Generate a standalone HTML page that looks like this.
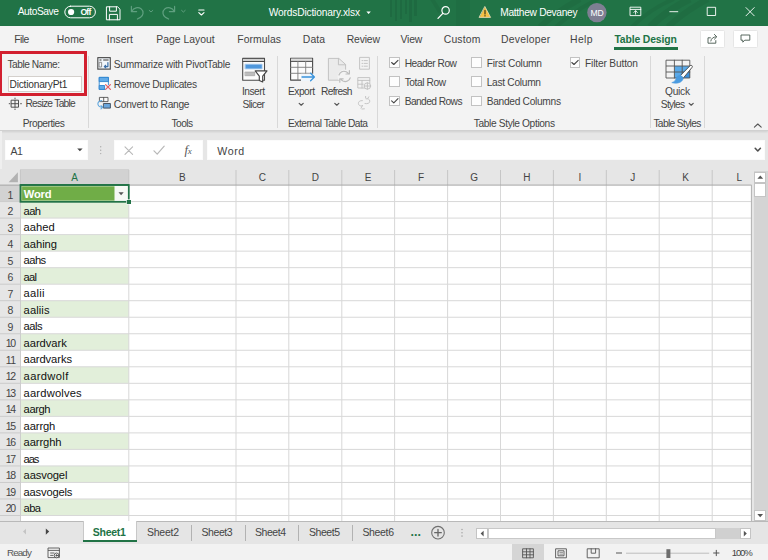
<!DOCTYPE html>
<html lang="en"><head><meta charset="utf-8"><title>WordsDictionary.xlsx - Excel</title>
<style>
html,body{margin:0;padding:0;}
body{width:768px;height:560px;overflow:hidden;position:relative;background:#e6e6e6;font-family:"Liberation Sans",sans-serif;}
.a{position:absolute;}
.t{position:absolute;white-space:nowrap;line-height:20px;height:20px;font-family:"Liberation Sans",sans-serif;}
svg{position:absolute;overflow:visible;}
#title{left:0;top:0;width:768px;height:25.6px;background:#217346;}
#ribbon{left:0;top:25.6px;width:768px;height:104.2px;background:#f3f3f3;border-bottom:1px solid #d0d0d0;box-shadow:0 1px 2px rgba(0,0,0,0.10);}
.sep{position:absolute;width:1px;background:#d8d8d8;top:56px;height:72px;}
.cb{position:absolute;width:8.6px;height:8.6px;border:1px solid #c2c2c2;background:#fdfdfd;}
.box{position:absolute;background:#fff;border:1px solid #dcdcdc;box-sizing:border-box;}
.vl{position:absolute;width:1px;background:#d9d9d9;top:185px;height:336px;}
.hl{position:absolute;height:1px;background:#d9d9d9;left:20.4px;width:731.4px;}
.band{position:absolute;left:20.9px;width:108.1px;background:#e2efda;}
.hsep{position:absolute;width:1px;background:#c9c9c9;top:170px;height:15px;}
.tsep{position:absolute;width:1px;background:#b2b2b2;top:525px;height:15.5px;}

</style></head>
<body>
<div class="a" id="title"></div>
<div class="a" style="left:389.5px;top:0;width:2.4px;height:17px;background:rgba(0,0,0,0.07);"></div>
<div class="a" style="left:394.6px;top:0;width:2.4px;height:21px;background:rgba(0,0,0,0.07);"></div>
<div class="a" style="left:399.8px;top:0;width:2.4px;height:19px;background:rgba(0,0,0,0.07);"></div>
<div class="a" style="left:404.6px;top:0;width:2.4px;height:14px;background:rgba(0,0,0,0.07);"></div>
<div class="a" style="left:409.4px;top:0;width:2.4px;height:22px;background:rgba(0,0,0,0.07);"></div>
<div class="a" style="left:414.4px;top:0;width:2.4px;height:16px;background:rgba(0,0,0,0.07);"></div>
<div class="a" style="left:456px;top:0;width:14px;height:25.6px;background:rgba(0,0,0,0.04);"></div>
<svg width="768" height="25.6" viewBox="0 0 768 25.6" style="left:0;top:0;overflow:hidden;" fill="none" stroke="rgba(0,0,0,0.05)"><path d="M650 27Q667 10 690 -1" stroke-width="7"/><path d="M668 27Q685 11 708 -1" stroke-width="6"/><path d="M632 27Q650 9 674 -1" stroke-width="4"/><path d="M540 27Q556 12 580 -1" stroke-width="6"/><path d="M556 27Q572 12 598 -1" stroke-width="4"/><path d="M432 -1L440 12" stroke-width="4"/></svg>
<div class="a" id="ribbon"></div>
<!-- tab underline + share/comment buttons -->
<div class="a" style="left:614.2px;top:47.4px;width:63.4px;height:2.4px;background:#217346;"></div>
<div class="box" style="left:699.7px;top:30px;width:25.4px;height:17.8px;border-color:#e6e6e6;border-radius:1.5px;"></div>
<div class="box" style="left:733.3px;top:30px;width:24.6px;height:17.8px;border-color:#e6e6e6;border-radius:1.5px;"></div>
<!-- ribbon separators -->
<div class="sep" style="left:88px;"></div>
<div class="sep" style="left:277.3px;"></div>
<div class="sep" style="left:377.4px;"></div>
<div class="sep" style="left:650.2px;"></div>
<div class="sep" style="left:704.3px;"></div>
<!-- table name input + red box -->
<div class="box" style="left:7.6px;top:75.6px;width:74.4px;height:16px;border-color:#d4d0cc;"></div>
<div class="a" style="left:-1px;top:51px;width:82px;height:39px;border:3px solid #d2202f;"></div>
<!-- checkboxes -->
<div class="cb" style="left:389.4px;top:57px;"></div>
<div class="cb" style="left:389.4px;top:76.2px;"></div>
<div class="cb" style="left:389.4px;top:95.5px;"></div>
<div class="cb" style="left:471.2px;top:57px;"></div>
<div class="cb" style="left:471.2px;top:76.2px;"></div>
<div class="cb" style="left:471.2px;top:95.5px;"></div>
<div class="cb" style="left:569.6px;top:57px;"></div>
<div class="a" style="left:0;top:131px;width:1.5px;height:38px;background:#efefef;"></div>
<!-- formula bar -->
<div class="box" style="left:4.7px;top:140.1px;width:83.8px;height:20.1px;border-color:#fbfbfb;"></div>
<div class="box" style="left:113.5px;top:140.1px;width:89.7px;height:20.1px;border-color:#fbfbfb;"></div>
<div class="box" style="left:206.8px;top:140.1px;width:557.8px;height:20.1px;border-color:#fbfbfb;"></div>
<!-- column headers -->
<div class="a" style="left:0;top:169.3px;width:752px;height:15.6px;background:#e6e6e6;"></div>
<div class="a" style="left:20.4px;top:169.3px;width:108.4px;height:15.6px;background:#d2d2d2;"></div>
<!-- grid -->
<div class="a" id="grid" style="left:20.4px;top:184.9px;width:731.4px;height:336px;background:#fff;"></div>
<div class="a" style="left:0;top:184.9px;width:20.4px;height:336px;background:#e6e6e6;"></div>
<div class="a" style="left:0;top:184.9px;width:20.4px;height:16.6px;background:#d2d2d2;"></div>
<svg width="768" height="560" viewBox="0 0 768 560" style="left:0;top:0;">
<rect x="20.90" y="185.05" width="107.90" height="16.52" fill="#70ad47"/>
<rect x="20.90" y="201.57" width="107.90" height="16.52" fill="#e2efda"/>
<rect x="20.90" y="234.62" width="107.90" height="16.52" fill="#e2efda"/>
<rect x="20.90" y="267.66" width="107.90" height="16.52" fill="#e2efda"/>
<rect x="20.90" y="300.70" width="107.90" height="16.52" fill="#e2efda"/>
<rect x="20.90" y="333.75" width="107.90" height="16.52" fill="#e2efda"/>
<rect x="20.90" y="366.79" width="107.90" height="16.52" fill="#e2efda"/>
<rect x="20.90" y="399.84" width="107.90" height="16.52" fill="#e2efda"/>
<rect x="20.90" y="432.88" width="107.90" height="16.52" fill="#e2efda"/>
<rect x="20.90" y="465.92" width="107.90" height="16.52" fill="#e2efda"/>
<rect x="20.90" y="498.97" width="107.90" height="16.52" fill="#e2efda"/>
<rect x="114.50" y="185.05" width="14.30" height="16.52" fill="#f6f9f4"/>
<rect x="128.30" y="185.05" width="1.00" height="335.95" fill="#d8d8d8"/>
<rect x="235.50" y="185.05" width="1.00" height="335.95" fill="#d8d8d8"/>
<rect x="288.30" y="185.05" width="1.00" height="335.95" fill="#d8d8d8"/>
<rect x="341.30" y="185.05" width="1.00" height="335.95" fill="#d8d8d8"/>
<rect x="394.10" y="185.05" width="1.00" height="335.95" fill="#d8d8d8"/>
<rect x="447.10" y="185.05" width="1.00" height="335.95" fill="#d8d8d8"/>
<rect x="500.00" y="185.05" width="1.00" height="335.95" fill="#d8d8d8"/>
<rect x="552.90" y="185.05" width="1.00" height="335.95" fill="#d8d8d8"/>
<rect x="605.80" y="185.05" width="1.00" height="335.95" fill="#d8d8d8"/>
<rect x="658.70" y="185.05" width="1.00" height="335.95" fill="#d8d8d8"/>
<rect x="711.70" y="185.05" width="1.00" height="335.95" fill="#d8d8d8"/>
<rect x="20.40" y="201.07" width="731.00" height="1.00" fill="#d8d8d8"/>
<rect x="0.00" y="201.07" width="20.40" height="1.00" fill="#cbcbcb"/>
<rect x="20.40" y="217.59" width="731.00" height="1.00" fill="#d8d8d8"/>
<rect x="0.00" y="217.59" width="20.40" height="1.00" fill="#cbcbcb"/>
<rect x="20.40" y="234.12" width="731.00" height="1.00" fill="#d8d8d8"/>
<rect x="0.00" y="234.12" width="20.40" height="1.00" fill="#cbcbcb"/>
<rect x="20.40" y="250.64" width="731.00" height="1.00" fill="#d8d8d8"/>
<rect x="0.00" y="250.64" width="20.40" height="1.00" fill="#cbcbcb"/>
<rect x="20.40" y="267.16" width="731.00" height="1.00" fill="#d8d8d8"/>
<rect x="0.00" y="267.16" width="20.40" height="1.00" fill="#cbcbcb"/>
<rect x="20.40" y="283.68" width="731.00" height="1.00" fill="#d8d8d8"/>
<rect x="0.00" y="283.68" width="20.40" height="1.00" fill="#cbcbcb"/>
<rect x="20.40" y="300.20" width="731.00" height="1.00" fill="#d8d8d8"/>
<rect x="0.00" y="300.20" width="20.40" height="1.00" fill="#cbcbcb"/>
<rect x="20.40" y="316.73" width="731.00" height="1.00" fill="#d8d8d8"/>
<rect x="0.00" y="316.73" width="20.40" height="1.00" fill="#cbcbcb"/>
<rect x="20.40" y="333.25" width="731.00" height="1.00" fill="#d8d8d8"/>
<rect x="0.00" y="333.25" width="20.40" height="1.00" fill="#cbcbcb"/>
<rect x="20.40" y="349.77" width="731.00" height="1.00" fill="#d8d8d8"/>
<rect x="0.00" y="349.77" width="20.40" height="1.00" fill="#cbcbcb"/>
<rect x="20.40" y="366.29" width="731.00" height="1.00" fill="#d8d8d8"/>
<rect x="0.00" y="366.29" width="20.40" height="1.00" fill="#cbcbcb"/>
<rect x="20.40" y="382.81" width="731.00" height="1.00" fill="#d8d8d8"/>
<rect x="0.00" y="382.81" width="20.40" height="1.00" fill="#cbcbcb"/>
<rect x="20.40" y="399.34" width="731.00" height="1.00" fill="#d8d8d8"/>
<rect x="0.00" y="399.34" width="20.40" height="1.00" fill="#cbcbcb"/>
<rect x="20.40" y="415.86" width="731.00" height="1.00" fill="#d8d8d8"/>
<rect x="0.00" y="415.86" width="20.40" height="1.00" fill="#cbcbcb"/>
<rect x="20.40" y="432.38" width="731.00" height="1.00" fill="#d8d8d8"/>
<rect x="0.00" y="432.38" width="20.40" height="1.00" fill="#cbcbcb"/>
<rect x="20.40" y="448.90" width="731.00" height="1.00" fill="#d8d8d8"/>
<rect x="0.00" y="448.90" width="20.40" height="1.00" fill="#cbcbcb"/>
<rect x="20.40" y="465.42" width="731.00" height="1.00" fill="#d8d8d8"/>
<rect x="0.00" y="465.42" width="20.40" height="1.00" fill="#cbcbcb"/>
<rect x="20.40" y="481.95" width="731.00" height="1.00" fill="#d8d8d8"/>
<rect x="0.00" y="481.95" width="20.40" height="1.00" fill="#cbcbcb"/>
<rect x="20.40" y="498.47" width="731.00" height="1.00" fill="#d8d8d8"/>
<rect x="0.00" y="498.47" width="20.40" height="1.00" fill="#cbcbcb"/>
<rect x="20.40" y="514.99" width="731.00" height="1.00" fill="#d8d8d8"/>
<rect x="0.00" y="514.99" width="20.40" height="1.00" fill="#cbcbcb"/>
<rect x="19.90" y="170.00" width="1.00" height="15.00" fill="#c6c6c6"/>
<rect x="128.30" y="170.00" width="1.00" height="15.00" fill="#c6c6c6"/>
<rect x="235.50" y="170.00" width="1.00" height="15.00" fill="#c6c6c6"/>
<rect x="288.30" y="170.00" width="1.00" height="15.00" fill="#c6c6c6"/>
<rect x="341.30" y="170.00" width="1.00" height="15.00" fill="#c6c6c6"/>
<rect x="394.10" y="170.00" width="1.00" height="15.00" fill="#c6c6c6"/>
<rect x="447.10" y="170.00" width="1.00" height="15.00" fill="#c6c6c6"/>
<rect x="500.00" y="170.00" width="1.00" height="15.00" fill="#c6c6c6"/>
<rect x="552.90" y="170.00" width="1.00" height="15.00" fill="#c6c6c6"/>
<rect x="605.80" y="170.00" width="1.00" height="15.00" fill="#c6c6c6"/>
<rect x="658.70" y="170.00" width="1.00" height="15.00" fill="#c6c6c6"/>
<rect x="711.70" y="170.00" width="1.00" height="15.00" fill="#c6c6c6"/>
<rect x="0.00" y="184.60" width="751.60" height="1.00" fill="#a6a6a6"/>
<rect x="20.00" y="185.45" width="1.00" height="335.95" fill="#cdcdcd"/>
<rect x="750.90" y="185.05" width="1.00" height="335.95" fill="#b0b0b0"/>
<rect x="20.40" y="184.10" width="108.40" height="1.40" fill="#217346"/>
<rect x="20.5" y="185.05" width="108.25" height="16.75" fill="none" stroke="#217346" stroke-width="1.8"/>
<rect x="21.8" y="186.35" width="105.65" height="14.15" fill="none" stroke="rgba(255,255,255,0.4)" stroke-width="0.8"/>
<rect x="126.20" y="199.40" width="5.00" height="5.00" fill="#fff"/>
<rect x="126.80" y="200.00" width="4.20" height="4.00" fill="#217346"/>
</svg>
<!-- bottom -->
<div class="a" style="left:0;top:520.9px;width:768px;height:23.4px;background:#e5e5e5;border-top:1px solid #b9b9b9;box-sizing:border-box;"></div>
<div class="a" style="left:0;top:544.2px;width:768px;height:15.8px;background:#f2f2f2;"></div>
<div class="a" style="left:83.2px;top:520.6px;width:53.8px;height:20px;background:#fff;border-left:1px solid #c8c8c8;border-right:1px solid #c8c8c8;box-sizing:border-box;"></div>
<div class="a" style="left:82.9px;top:540px;width:54.2px;height:1.8px;background:#217346;"></div>
<div class="tsep" style="left:190.8px;"></div>
<div class="tsep" style="left:244.5px;"></div>
<div class="tsep" style="left:298.1px;"></div>
<div class="tsep" style="left:351.8px;"></div>
<!-- scrollbars -->
<div class="a" style="left:754.2px;top:169.3px;width:13.8px;height:352px;background:#d4d4d4;"></div>
<div class="a" style="left:754.2px;top:169.3px;width:13.8px;height:2.2px;background:#e6e6e6;"></div>
<div class="box" style="left:754.4px;top:171.5px;width:11.4px;height:11.2px;border-color:#c4c4c4;"></div>
<div class="box" style="left:754.4px;top:183px;width:11.4px;height:13.8px;border-color:#c4c4c4;"></div>
<div class="box" style="left:754.4px;top:509.8px;width:11.6px;height:11.4px;border-color:#c4c4c4;"></div>
<div class="a" style="left:476.6px;top:527.8px;width:273.6px;height:11.2px;background:#d0d0d0;"></div>
<div class="box" style="left:475.8px;top:527.8px;width:11.8px;height:11.2px;border-color:#c4c4c4;"></div>
<div class="box" style="left:487.6px;top:527.8px;width:228px;height:11.2px;border-color:#c8c8c8;"></div>
<div class="box" style="left:739.8px;top:527.8px;width:11.6px;height:11.2px;border-color:#c4c4c4;"></div>
<div class="a" style="left:511.8px;top:543.8px;width:32.4px;height:16.2px;background:#d5d5d5;"></div>
<svg width="768" height="560" viewBox="0 0 768 560" style="left:0;top:0;" fill="none" stroke-linecap="round" stroke-linejoin="round">
<!-- ===== title bar ===== -->
<g stroke="#fff" stroke-width="1">
 <rect x="64.8" y="6.2" width="30.6" height="11.6" rx="5.8"/>
 <circle cx="71.1" cy="12" r="3.1" fill="#fff" stroke="none"/>
 <!-- save -->
 <path d="M106.8 6.8h10.8l2.4 2.4v10.6h-13.2z"/>
 <path d="M109.6 6.8v4.4h6.8v-4.4M109.4 19.8v-5.4h8v5.4"/>
 <!-- customize -->
 <path d="M198.8 10h5.2" stroke-width="1.1"/>
 <path d="M198.8 12.6l2.6 2.4 2.6-2.4" stroke-width="1.1"/>
 <!-- filename caret -->
 <path d="M366.4 11.6h4.4l-2.2 2.4z" fill="#fff" stroke="none"/>
 <!-- search -->
 <circle cx="445.6" cy="10.4" r="3.7" stroke-width="1.2"/>
 <path d="M442.8 13.4l-4.8 5" stroke-width="1.3"/>
 <!-- ribbon display options -->
 <rect x="630.4" y="7.2" width="10.4" height="8.4" stroke-width="0.9"/>
 <path d="M630.4 9.4h10.4" stroke-width="0.9"/>
 <path d="M635.6 14.200v-3.400M633.900 12.400l1.700-1.700 1.700 1.700" stroke-width="0.9"/>
 <!-- min max close -->
 <path d="M669.8 11.700h8" stroke-width="0.9"/>
 <rect x="707.6" y="7.300" width="8" height="8.200" stroke-width="0.9"/>
 <path d="M746 7.600l8.200 8.200M754.200 7.600l-8.200 8.200" stroke-width="0.9"/>
</g>
<!-- undo / redo dimmed -->
<g stroke="#5f9f7f" stroke-width="1.2">
 <path d="M131.4 6.4v5.2h5.2"/>
 <path d="M131.8 11.2c2-3.6 6.4-4.6 9.2-2.4 3.2 2.6 2.4 6.6-0.6 8.6l-3 1.6"/>
 <path d="M149.2 10.4l1.8 1.6 1.8-1.6" stroke-width="1"/>
 <path d="M174.6 6.4v5.2h-5.2"/>
 <path d="M174.2 11.2c-2-3.6-6.400-4.600-9.200-2.400-3.200 2.600-2.400 6.600 0.600 8.600l3 1.600"/>
 <path d="M181.600 10.400l1.800 1.600 1.800-1.600" stroke-width="1"/>
</g>
<!-- warning -->
<path d="M485 6.800l5.600 10.600h-11.200z" fill="#f4c044" stroke="#e8e0c0" stroke-width="0.8"/>
<path d="M485 10.400v3.600M485 15.600v0.300" stroke="#3a3a1a" stroke-width="1.200"/>
<!-- avatar -->
<circle cx="596.900" cy="12.600" r="9.700" fill="#7e7f93" stroke="none"/>
<!-- share / comments -->
<g stroke="#46584e" stroke-width="0.9">
 <path d="M710.4 37.800h-2.400v5.400h7.800v-2.600"/>
 <path d="M710.800 41c0.400-2.600 2.400-4 5.200-4.200M714.400 34.400l2.400 2.400-2.400 2.400"/>
 <path d="M741.400 35h8.400v5.200h-5l-2 2v-2h-1.400z"/>
</g>
<!-- ===== ribbon ===== -->
<!-- resize table -->
<g stroke="#4a4a4a" stroke-width="0.95">
 <rect x="11.500" y="100.200" width="7" height="7"/>
 <path d="M11.500 103.700h7M15 100.200v7"/>
 <path d="M9.800 103.700h-0.600M20.600 103.700h0.800M15 98.600v-0.500M15 109v0.600"/>
</g>
<!-- pivot -->
<g>
 <rect x="97.8" y="57.700" width="12.500" height="11.500" fill="#f1f6fb" stroke="#555" stroke-width="1.2"/>
 <path d="M99.500 60h2M103.200 60h5.400" stroke="#7a7a7a" stroke-width="1.400" stroke-linecap="butt"/>
 <rect x="99.500" y="62.300" width="2.100" height="4.700" fill="none" stroke="#7a7a7a" stroke-width="0.800"/>
 <path d="M107.900 62.500v4.100h-3.400M105.700 65.300l-1.400 1.300 1.400 1.300" stroke="#3b6fa8" stroke-width="1.200"/>
</g>
<!-- remove duplicates -->
<g>
 <rect x="99.6" y="77.400" width="8.800" height="12" fill="#fff" stroke="#2f84cf" stroke-width="0.9"/>
 <rect x="99.6" y="77.400" width="8.800" height="4.200" fill="#62abe8" stroke="#2f84cf" stroke-width="0.9"/>
 <rect x="99.6" y="85.500" width="5" height="3.900" fill="#62abe8" stroke="#2f84cf" stroke-width="0.900"/>
 <rect x="105.100" y="85" width="4" height="5" fill="#f3f3f3" stroke="none"/>
 <path d="M105.600 84.600l4.800 4.800M110.400 84.600l-4.800 4.800" stroke="#e4606a" stroke-width="1.200"/>
</g>
<!-- convert to range -->
<g>
 <rect x="99.800" y="97.400" width="8.200" height="4.200" fill="#f8f8f8" stroke="#555" stroke-width="0.900"/>
 <path d="M103.700 97.400v4.200" stroke="#555" stroke-width="0.900"/>
 <rect x="103.800" y="103.500" width="6.600" height="4.600" fill="#6aa6dc" stroke="#3c4a5a" stroke-width="0.900"/>
 <path d="M101.800 100.600c-2.800 0.200-4.400 2-3.800 4 0.500 1.600 2.200 2.600 4.600 2.600M101 105.600l1.800 1.600-1.800 1.600" stroke="#5fa6de" stroke-width="1.100"/>
</g>
<!-- slicer -->
<g>
 <rect x="242.700" y="58.400" width="21.800" height="21.900" fill="#fcfcfc" stroke="#4a4a4a" stroke-width="1.1"/>
 <rect x="243.200" y="58.900" width="20.800" height="2.300" fill="#cfcfcf" stroke="none"/>
 <path d="M242.700 61.500h21.800" stroke="#4a4a4a" stroke-width="1"/>
 <rect x="245.300" y="64.200" width="16.800" height="4.700" fill="#4f97dc" stroke="#a9cdf0" stroke-width="0.800"/>
 <rect x="245.300" y="72" width="9.400" height="3.700" fill="#bdbdbd" stroke="#9a9a9a" stroke-width="0.600"/>
 <path d="M255.200 70.900h11.800l-4.300 5.200v5.900l-3.400-1.600v-4.300z" fill="#fff" stroke="#444" stroke-width="1.150"/>
</g>
<!-- export -->
<g>
 <rect x="290.600" y="58.200" width="22" height="21.900" fill="#fcfcfc" stroke="#4a4a4a" stroke-width="1.1"/>
 <rect x="291.100" y="58.700" width="21" height="2.300" fill="#dcdcdc" stroke="none"/>
 <path d="M290.600 61.400h22" stroke="#4a4a4a" stroke-width="1"/>
 <path d="M290.600 67.300h22M290.600 73.300h22M297.900 61.400v18.700M305.700 61.400v18.700" stroke="#7d7d7d" stroke-width="0.900"/>
 <rect x="301" y="73.800" width="14" height="7.200" fill="#eef5fb" stroke="none"/>
 <path d="M302 77h12.200M310.600 73.200l3.800 3.800-3.800 3.800" stroke="#3a93dc" stroke-width="1.300"/>
</g>
<!-- refresh (disabled) -->
<g stroke="#c2c2c2" stroke-width="1">
 <path d="M338.400 58.400h-10v21.800h17.200v-15.400z" fill="#ebebeb"/>
 <path d="M338.400 58.400v6.400h7.200" fill="none"/>
 <circle cx="344.600" cy="76.400" r="7" fill="#f3f3f3" stroke="none"/>
 <path d="M339 75c0.800-3 4.200-4.600 7.200-3.200 1 0.500 1.800 1.200 2.400 2.200M349.400 70.600v3.400h-3.400" stroke="#bcbcbc" stroke-width="1.200" fill="none"/>
 <path d="M350.200 77.800c-0.800 3-4.200 4.600-7.200 3.200-1-0.500-1.800-1.200-2.400-2.200M339.800 82.200v-3.400h3.400" stroke="#bcbcbc" stroke-width="1.200" fill="none"/>
</g>
<!-- small disabled icons -->
<g stroke="#c0c0c0" stroke-width="0.900">
 <rect x="360" y="57.400" width="9.400" height="11.800"/>
 <path d="M362 60.600h1M364.400 60.600h3M362 63.400h1M364.400 63.400h3M362 66.200h1M364.400 66.200h3"/>
 <rect x="358.200" y="77.600" width="11.600" height="10.400"/>
 <path d="M358.200 80.400h11.600M362 80.400v7.600M358.200 84.200h5"/>
 <circle cx="367.400" cy="86" r="3.200" fill="#f3f3f3"/>
 <path d="M364.200 86h6.400M367.400 82.800v6.400"/>
 <path d="M362.400 100.600c-2.800-0.200-4 1.200-4 2.800s1.400 2.800 3.400 2.600M365 103.600c2.600 0.400 4.800-0.400 4.800-2.400s-1.600-2.600-3.600-2.400M361 108.200l1.600-2.800M368.800 96.800l-1 1.600M365.600 96.400v1.600M362 109l2.400-0.200"/>
</g>
<!-- carets -->
<g stroke="#555" stroke-width="1.25">
 <path d="M299.200 103.400l2 1.800 2-1.800"/>
 <path d="M334.800 103.400l2 1.800 2-1.800"/>
 <path d="M689.200 103.400l2 1.800 2-1.800"/>
 <path d="M754.400 127.200l3.400-3.200 3.400 3.200" stroke-width="1.100"/>
</g>
<!-- checkmarks -->
<g stroke="#444" stroke-width="1.100">
 <path d="M391.600 62.500l2.200 2 4.200-4.200"/>
 <path d="M391.600 100.900l2.200 2 4.200-4.200"/>
 <path d="M571.800 62.500l2.200 2 4.200-4.200"/>
</g>
<!-- quick styles -->
<g>
 <rect x="674.400" y="66" width="15.400" height="12" fill="#5aa9e8" stroke="none"/>
 <rect x="682.200" y="72" width="7.600" height="6" fill="#3d8fd9" stroke="none"/>
 <rect x="666.400" y="60.200" width="23.400" height="17.800" stroke="#555" stroke-width="0.900"/>
 <path d="M666.400 66h23.400M666.400 72h23.400M674.400 60.200v17.800M682.200 60.200v17.800" stroke="#555" stroke-width="0.900"/>
 <path d="M690.600 65.400c1.200-0.400 2.200 0.600 1.600 1.800l-8.800 10.800-2.800-2.200z" fill="#fff" stroke="#555" stroke-width="1"/>
 <path d="M680.400 75.600c1.800 0.500 3 2 2.600 3.600-1.400 3.400-6.200 5-11.200 3.400 2.400-0.700 3.500-1.900 4.100-3.700 0.700-2.300 2.400-3.800 4.500-3.300z" fill="#4a9be0" stroke="#4a9be0" stroke-width="0.600"/>
</g>
<!-- ===== formula bar ===== -->
<path d="M77.200 148.400h5.400l-2.700 2.900z" fill="#444"/>
<path d="M755.200 148.300l2.600 2.700 2.600-2.700" stroke="#505050" stroke-width="1.600"/>
<g fill="#aaa" stroke="none">
 <circle cx="100.700" cy="146.800" r="0.700"/><circle cx="100.700" cy="150.200" r="0.700"/><circle cx="100.700" cy="153.600" r="0.700"/>
 <circle cx="462" cy="529.500" r="0.800"/><circle cx="462" cy="532.800" r="0.800"/><circle cx="462" cy="536.100" r="0.800"/>
</g>
<path d="M125 146.800l7.600 7.600M132.600 146.800l-7.600 7.600" stroke="#b8b8b8" stroke-width="1.100"/>
<path d="M154 150.800l3.200 3.400 7-8" stroke="#b8b8b8" stroke-width="1.200"/>
<!-- select-all triangle -->
<path d="M17.9 172.2v10h-9.3z" fill="#b2b2b2"/>
<!-- filter caret -->
<path d="M118.500 192.300h5.200l-2.600 2.900z" fill="#555"/>
<!-- scrollbar arrows -->
<g fill="#555">
 <path d="M757.400 178.800h5.800l-2.900-3.200z"/>
 <path d="M757.300 514h5.800l-2.900 3.200z"/>
 <path d="M483.600 530.800v5.600l-3-2.800z"/>
 <path d="M743.800 530.800v5.600l3-2.800z"/>
 <path d="M45.800 528.400v6.400l3.400-3.200z" fill="#444"/>
 <path d="M26 528.800v5.600l-3-2.800z" fill="#c4c4c4"/>
</g>
<!-- new sheet -->
<circle cx="438" cy="532.7" r="6.3" stroke="#707070" stroke-width="1.1"/>
<path d="M434.700 532.700h6.600M438 529.400v6.600" stroke="#666" stroke-width="1.3"/>
<!-- ===== status bar ===== -->
<g stroke="#555" stroke-width="0.900">
 <rect x="48.400" y="548" width="11" height="9.600"/>
 <path d="M48.400 550.400h11M50.600 553h3.400M50.600 555.400h2.400"/>
 <circle cx="56.600" cy="555.400" r="2.400" fill="#f3f3f3"/>
 <circle cx="56.600" cy="555.400" r="0.700" fill="#555"/>
 <!-- normal -->
 <rect x="523" y="548.800" width="10.400" height="9"/>
 <path d="M523 551.800h10.400M523 554.800h10.400M526.500 548.800v9M530 548.800v9"/>
 <!-- page layout -->
 <rect x="556" y="548.800" width="10.400" height="9"/>
 <rect x="558.400" y="550.800" width="5.600" height="5"/>
 <path d="M559.800 552.600h2.800M559.800 554.200h2.800" stroke-width="0.600"/>
 <!-- page break -->
 <rect x="587.600" y="548.800" width="11.600" height="9"/>
 <path d="M591.200 548.800v4.400h4.400v-4.400"/>
 <!-- zoom -->
 <path d="M616.400 553h5.200" stroke-width="1"/>
 <path d="M626.400 553.200h82.400" stroke="#a8a8a8" stroke-width="0.700"/>
 <path d="M713.600 553h5.400M716.300 550.300v5.400" stroke-width="1"/>
 <rect x="666.400" y="549.200" width="4" height="8.800" fill="#6e6e6e" stroke="none"/>
</g>
</svg>
<span class="t" style="left:184.600px;top:140.400px;font-family:'Liberation Serif',serif;font-style:italic;font-size:12.500px;color:#555;letter-spacing:-0.300px;">f<span style="font-size:9px;">x</span></span>


<div id="txt">
<span class="t" style="font-size:10.2px;color:#fff;top:2.40px;letter-spacing:-0.427px;left:17.70px;">AutoSave</span>
<span class="t" style="font-size:8.6px;color:#fff;top:2.30px;font-weight:bold;letter-spacing:-0.711px;left:80.40px;">Off</span>
<span class="t" style="font-size:10.2px;color:#fff;top:2.60px;letter-spacing:-0.151px;left:268.70px;">WordsDictionary.xlsx</span>
<span class="t" style="font-size:10.2px;color:#fff;top:2.80px;letter-spacing:-0.310px;left:500.30px;">Matthew Devaney</span>
<span class="t" style="font-size:8.6px;color:#fff;top:2.90px;letter-spacing:-0.175px;left:590.60px;">MD</span>
<span class="t" style="font-size:10.4px;color:#444;top:29.90px;letter-spacing:-0.617px;left:14.30px;">File</span>
<span class="t" style="font-size:10.4px;color:#444;top:29.90px;letter-spacing:0.027px;left:56.80px;">Home</span>
<span class="t" style="font-size:10.4px;color:#444;top:29.90px;letter-spacing:0.000px;left:106.80px;">Insert</span>
<span class="t" style="font-size:10.4px;color:#444;top:29.90px;letter-spacing:-0.001px;left:156.25px;">Page Layout</span>
<span class="t" style="font-size:10.4px;color:#444;top:29.90px;letter-spacing:0.055px;left:237.30px;">Formulas</span>
<span class="t" style="font-size:10.4px;color:#444;top:29.90px;letter-spacing:0.082px;left:302.80px;">Data</span>
<span class="t" style="font-size:10.4px;color:#444;top:29.90px;letter-spacing:-0.156px;left:346.70px;">Review</span>
<span class="t" style="font-size:10.4px;color:#444;top:29.90px;letter-spacing:-0.181px;left:400.50px;">View</span>
<span class="t" style="font-size:10.4px;color:#444;top:29.90px;letter-spacing:0.138px;left:443.80px;">Custom</span>
<span class="t" style="font-size:10.4px;color:#444;top:29.90px;letter-spacing:0.241px;left:501.00px;">Developer</span>
<span class="t" style="font-size:10.4px;color:#444;top:29.90px;letter-spacing:0.408px;left:570.00px;">Help</span>
<span class="t" style="font-size:10.4px;color:#217346;top:29.90px;font-weight:bold;letter-spacing:-0.137px;left:614.40px;">Table Design</span>
<span class="t" style="font-size:10.2px;color:#444;top:54.50px;letter-spacing:-0.470px;left:7.50px;">Table Name:</span>
<span class="t" style="font-size:10.2px;color:#333;top:74.50px;letter-spacing:-0.216px;left:9.50px;">DictionaryPt1</span>
<span class="t" style="font-size:10.2px;color:#444;top:94.30px;letter-spacing:-0.704px;left:25.40px;">Resize Table</span>
<span class="t" style="font-size:10.2px;color:#444;top:114.10px;letter-spacing:-0.493px;left:22.80px;">Properties</span>
<span class="t" style="font-size:10.2px;color:#444;top:55.20px;letter-spacing:-0.231px;left:113.75px;">Summarize with PivotTable</span>
<span class="t" style="font-size:10.2px;color:#444;top:74.90px;letter-spacing:-0.318px;left:113.75px;">Remove Duplicates</span>
<span class="t" style="font-size:10.2px;color:#444;top:94.60px;letter-spacing:-0.274px;left:113.75px;">Convert to Range</span>
<span class="t" style="font-size:10.2px;color:#444;top:114.10px;letter-spacing:-0.595px;left:171.60px;">Tools</span>
<span class="t" style="font-size:10.2px;color:#444;top:81.70px;letter-spacing:-0.497px;left:242.00px;">Insert</span>
<span class="t" style="font-size:10.2px;color:#444;top:94.60px;letter-spacing:-0.597px;left:242.50px;">Slicer</span>
<span class="t" style="font-size:10.2px;color:#444;top:81.70px;letter-spacing:-0.491px;left:288.00px;">Export</span>
<span class="t" style="font-size:10.2px;color:#444;top:81.70px;letter-spacing:-0.695px;left:321.00px;">Refresh</span>
<span class="t" style="font-size:10.2px;color:#444;top:114.10px;letter-spacing:-0.485px;left:288.00px;">External Table Data</span>
<span class="t" style="font-size:10.2px;color:#444;top:53.60px;letter-spacing:-0.481px;left:404.70px;">Header Row</span>
<span class="t" style="font-size:10.2px;color:#444;top:72.60px;letter-spacing:-0.429px;left:404.70px;">Total Row</span>
<span class="t" style="font-size:10.2px;color:#444;top:91.75px;letter-spacing:-0.564px;left:404.70px;">Banded Rows</span>
<span class="t" style="font-size:10.2px;color:#444;top:53.60px;letter-spacing:-0.227px;left:486.75px;">First Column</span>
<span class="t" style="font-size:10.2px;color:#444;top:72.60px;letter-spacing:-0.295px;left:486.75px;">Last Column</span>
<span class="t" style="font-size:10.2px;color:#444;top:91.75px;letter-spacing:-0.300px;left:486.75px;">Banded Columns</span>
<span class="t" style="font-size:10.2px;color:#444;top:53.60px;letter-spacing:-0.161px;left:585.00px;">Filter Button</span>
<span class="t" style="font-size:10.2px;color:#444;top:114.10px;letter-spacing:-0.363px;left:473.75px;">Table Style Options</span>
<span class="t" style="font-size:10.2px;color:#444;top:81.50px;letter-spacing:-0.262px;left:665.00px;">Quick</span>
<span class="t" style="font-size:10.2px;color:#444;top:94.80px;letter-spacing:-0.710px;left:660.80px;">Styles</span>
<span class="t" style="font-size:10.2px;color:#444;top:114.40px;letter-spacing:-0.631px;left:653.40px;">Table Styles</span>
<span class="t" style="font-size:10.5px;color:#444;top:140.50px;letter-spacing:-0.344px;left:10.40px;">A1</span>
<span class="t" style="font-size:10.6px;color:#444;top:141.30px;letter-spacing:0.592px;left:217.30px;">Word</span>
<span class="t" style="font-size:10px;color:#217346;top:167.90px;letter-spacing:0.000px;left:71.26px;">A</span>
<span class="t" style="font-size:10px;color:#444;top:167.90px;letter-spacing:0.000px;left:179.06px;">B</span>
<span class="t" style="font-size:10px;color:#444;top:167.90px;letter-spacing:0.000px;left:258.78px;">C</span>
<span class="t" style="font-size:10px;color:#444;top:167.90px;letter-spacing:0.000px;left:311.68px;">D</span>
<span class="t" style="font-size:10px;color:#444;top:167.90px;letter-spacing:0.000px;left:364.86px;">E</span>
<span class="t" style="font-size:10px;color:#444;top:167.90px;letter-spacing:0.000px;left:418.05px;">F</span>
<span class="t" style="font-size:10px;color:#444;top:167.90px;letter-spacing:0.000px;left:470.16px;">G</span>
<span class="t" style="font-size:10px;color:#444;top:167.90px;letter-spacing:0.000px;left:523.33px;">H</span>
<span class="t" style="font-size:10px;color:#444;top:167.90px;letter-spacing:0.000px;left:578.46px;">I</span>
<span class="t" style="font-size:10px;color:#444;top:167.90px;letter-spacing:0.000px;left:630.25px;">J</span>
<span class="t" style="font-size:10px;color:#444;top:167.90px;letter-spacing:0.000px;left:682.36px;">K</span>
<span class="t" style="font-size:10px;color:#444;top:167.90px;letter-spacing:0.000px;left:736.42px;">L</span>
<span class="t" style="font-size:11.2px;color:#fff;top:184.26px;font-weight:bold;letter-spacing:-0.164px;left:23.70px;">Word</span>
<span class="t" style="font-size:10.5px;color:#444;top:184.56px;letter-spacing:0.000px;left:7.48px;">1</span>
<span class="t" style="font-size:11.2px;color:#111;top:200.78px;letter-spacing:-0.636px;left:23.60px;">aah</span>
<span class="t" style="font-size:10.5px;color:#444;top:201.08px;letter-spacing:0.000px;left:7.48px;">2</span>
<span class="t" style="font-size:11.2px;color:#111;top:217.31px;letter-spacing:-0.006px;left:23.60px;">aahed</span>
<span class="t" style="font-size:10.5px;color:#444;top:217.61px;letter-spacing:0.000px;left:7.48px;">3</span>
<span class="t" style="font-size:11.2px;color:#111;top:233.83px;letter-spacing:-0.042px;left:23.60px;">aahing</span>
<span class="t" style="font-size:10.5px;color:#444;top:234.13px;letter-spacing:0.000px;left:7.48px;">4</span>
<span class="t" style="font-size:11.2px;color:#111;top:250.35px;letter-spacing:-0.555px;left:23.60px;">aahs</span>
<span class="t" style="font-size:10.5px;color:#444;top:250.65px;letter-spacing:0.000px;left:7.48px;">5</span>
<span class="t" style="font-size:11.2px;color:#111;top:266.87px;letter-spacing:-0.769px;left:23.60px;">aal</span>
<span class="t" style="font-size:10.5px;color:#444;top:267.17px;letter-spacing:0.000px;left:7.48px;">6</span>
<span class="t" style="font-size:11.2px;color:#111;top:283.39px;letter-spacing:0.273px;left:23.60px;">aalii</span>
<span class="t" style="font-size:10.5px;color:#444;top:283.69px;letter-spacing:0.000px;left:7.48px;">7</span>
<span class="t" style="font-size:11.2px;color:#111;top:299.92px;letter-spacing:0.080px;left:23.60px;">aaliis</span>
<span class="t" style="font-size:10.5px;color:#444;top:300.22px;letter-spacing:0.000px;left:7.48px;">8</span>
<span class="t" style="font-size:11.2px;color:#111;top:316.44px;letter-spacing:-0.544px;left:23.60px;">aals</span>
<span class="t" style="font-size:10.5px;color:#444;top:316.74px;letter-spacing:0.000px;left:7.48px;">9</span>
<span class="t" style="font-size:11.2px;color:#111;top:332.96px;letter-spacing:-0.047px;left:23.60px;">aardvark</span>
<span class="t" style="font-size:10.5px;color:#444;top:333.26px;letter-spacing:-1.200px;left:5.70px;">10</span>
<span class="t" style="font-size:11.2px;color:#111;top:349.48px;letter-spacing:-0.091px;left:23.60px;">aardvarks</span>
<span class="t" style="font-size:10.5px;color:#444;top:349.78px;letter-spacing:-0.606px;left:5.70px;">11</span>
<span class="t" style="font-size:11.2px;color:#111;top:366.00px;letter-spacing:0.343px;left:23.60px;">aardwolf</span>
<span class="t" style="font-size:10.5px;color:#444;top:366.30px;letter-spacing:-1.200px;left:5.70px;">12</span>
<span class="t" style="font-size:11.2px;color:#111;top:382.52px;letter-spacing:0.167px;left:23.60px;">aardwolves</span>
<span class="t" style="font-size:10.5px;color:#444;top:382.82px;letter-spacing:-1.200px;left:5.70px;">13</span>
<span class="t" style="font-size:11.2px;color:#111;top:399.05px;letter-spacing:-0.406px;left:23.60px;">aargh</span>
<span class="t" style="font-size:10.5px;color:#444;top:399.35px;letter-spacing:-1.200px;left:5.70px;">14</span>
<span class="t" style="font-size:11.2px;color:#111;top:415.57px;letter-spacing:-0.129px;left:23.60px;">aarrgh</span>
<span class="t" style="font-size:10.5px;color:#444;top:415.87px;letter-spacing:-1.200px;left:5.70px;">15</span>
<span class="t" style="font-size:11.2px;color:#111;top:432.09px;letter-spacing:-0.110px;left:23.60px;">aarrghh</span>
<span class="t" style="font-size:10.5px;color:#444;top:432.39px;letter-spacing:-1.200px;left:5.70px;">16</span>
<span class="t" style="font-size:11.2px;color:#111;top:448.61px;letter-spacing:-1.123px;left:23.60px;">aas</span>
<span class="t" style="font-size:10.5px;color:#444;top:448.91px;letter-spacing:-1.200px;left:5.70px;">17</span>
<span class="t" style="font-size:11.2px;color:#111;top:465.13px;letter-spacing:-0.142px;left:23.60px;">aasvogel</span>
<span class="t" style="font-size:10.5px;color:#444;top:465.44px;letter-spacing:-1.200px;left:5.70px;">18</span>
<span class="t" style="font-size:11.2px;color:#111;top:481.66px;letter-spacing:-0.211px;left:23.60px;">aasvogels</span>
<span class="t" style="font-size:10.5px;color:#444;top:481.96px;letter-spacing:-1.200px;left:5.70px;">19</span>
<span class="t" style="font-size:11.2px;color:#111;top:498.18px;letter-spacing:-0.636px;left:23.60px;">aba</span>
<span class="t" style="font-size:10.5px;color:#444;top:498.48px;letter-spacing:-1.200px;left:5.70px;">20</span>
<span class="t" style="font-size:11.2px;color:#111;top:514.70px;letter-spacing:-0.521px;left:23.60px;clip-path:inset(0 0 14.1px 0);">abaca</span>
<span class="t" style="font-size:10.5px;color:#217346;top:521.50px;font-weight:bold;letter-spacing:-0.267px;left:92.80px;">Sheet1</span>
<span class="t" style="font-size:10.5px;color:#444;top:521.50px;letter-spacing:-0.256px;left:147.00px;">Sheet2</span>
<span class="t" style="font-size:10.5px;color:#444;top:521.50px;letter-spacing:-0.416px;left:201.50px;">Sheet3</span>
<span class="t" style="font-size:10.5px;color:#444;top:521.50px;letter-spacing:-0.456px;left:255.00px;">Sheet4</span>
<span class="t" style="font-size:10.5px;color:#444;top:521.50px;letter-spacing:-0.456px;left:309.00px;">Sheet5</span>
<span class="t" style="font-size:10.5px;color:#444;top:521.50px;letter-spacing:-0.336px;left:362.40px;">Sheet6</span>
<span class="t" style="font-size:12.4px;color:#217346;top:521.60px;font-weight:bold;letter-spacing:0.036px;left:410.50px;">...</span>
<span class="t" style="font-size:9.8px;color:#555;top:543.30px;letter-spacing:-0.882px;left:7.00px;">Ready</span>
<span class="t" style="font-size:9.6px;color:#444;top:543.40px;letter-spacing:-1.182px;left:731.80px;">100%</span>
</div>
</body></html>
